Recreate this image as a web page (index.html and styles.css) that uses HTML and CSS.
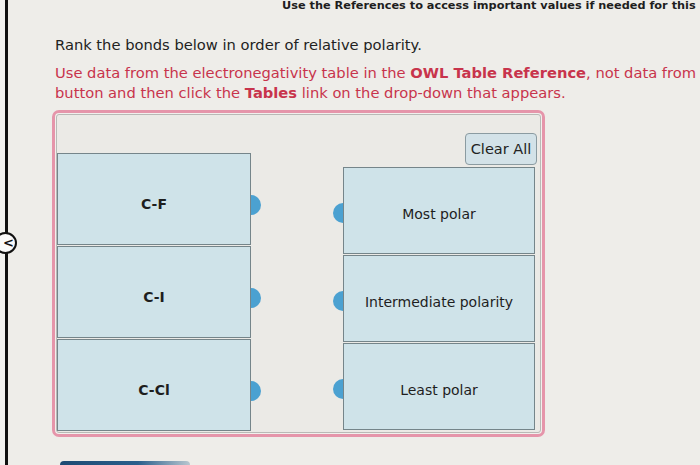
FILE: index.html
```html
<!DOCTYPE html>
<html>
<head>
<meta charset="utf-8">
<link rel="stylesheet" href="styles.css">
</head>
<body>
<div class="page">
  <div class="edge"></div>
  <div class="rule"></div>
  <div class="toggle">&lt;</div>
  <main class="main">
    <div class="refs">Use the References to access important values if needed for this</div>
    <p class="prompt">Rank the bonds below in order of relative polarity.</p>
    <p class="note">Use data from the electronegativity table in the <b>OWL Table Reference</b>, not data from your text. The References<br>button and then click the <b>Tables</b> link on the drop-down that appears.</p>
    <div class="panel">
      <div class="panel-inner">
        <div class="col col-left">
          <div class="card card-src"><b>C-F</b></div>
          <div class="card card-src"><b>C-I</b></div>
          <div class="card card-src"><b>C-Cl</b></div>
        </div>
        <div class="col col-right">
          <div class="actions"><button class="clear">Clear All</button></div>
          <div class="card card-dst">Most polar</div>
          <div class="card card-dst">Intermediate polarity</div>
          <div class="card card-dst">Least polar</div>
        </div>
      </div>
    </div>
    <div class="submit"></div>
  </main>
</div>
</body>
</html>
```

FILE: styles.css
```css
html, body {
  margin: 0;
  padding: 0;
  width: 700px;
  height: 465px;
  overflow: hidden;
  background: #eeede9;
  font-family: "DejaVu Sans", Verdana, sans-serif;
  color: #222;
}
.page {
  position: relative;
  display: flex;
  height: 465px;
}
.edge {
  width: 5px;
  background: #f2f2f0;
}
.rule {
  width: 3px;
  background: #111;
}
.toggle {
  position: absolute;
  left: -6px;
  top: 232px;
  width: 18px;
  height: 18px;
  border: 2px solid #111;
  border-radius: 50%;
  background: #fafafa;
  color: #111;
  font-weight: bold;
  font-size: 13px;
  line-height: 18px;
  text-align: right;
  padding-right: 1px;
  box-sizing: content-box;
}
.main {
  flex: 1;
  padding-left: 47px;
  min-width: 0;
}
.refs {
  margin-left: 227px;
  height: 16px;
  line-height: 16px;
  margin-top: -2px;
  font-size: 11.3px;
  font-weight: bold;
  white-space: nowrap;
  color: #1e1e1e;
}
.prompt {
  margin: 22px 0 0;
  font-size: 14.7px;
  line-height: 18px;
  white-space: nowrap;
}
.note {
  margin: 9px 0 0;
  font-size: 14.7px;
  line-height: 20px;
  color: #c8344c;
  white-space: nowrap;
}
.panel {
  margin: 7px 0 0 -3px;
  width: 493px;
  height: 327px;
  box-sizing: border-box;
  border: 3px solid #e595aa;
  border-radius: 7px;
  padding: 1px;
  background: #f1f0ed;
}
.panel-inner {
  box-sizing: border-box;
  height: 100%;
  border: 1px solid #b9b9b6;
  border-radius: 3px;
  background: #ebeae6;
  display: grid;
  grid-template-columns: 194px 192px;
  column-gap: 92px;
  padding-right: 5px;
}
.col {
  display: flex;
  flex-direction: column;
  gap: 1px;
}
.col-left {
  margin-top: 38px;
}
.col-right {
  margin-top: 18px;
}
.actions {
  display: flex;
  justify-content: flex-end;
  margin-bottom: 1px;
}
.clear {
  width: 72px;
  height: 32px;
  margin-right: -2px;
  background: #d3e2e8;
  border: 1px solid #8b9ba1;
  border-radius: 4px;
  font-family: "DejaVu Sans", Verdana, sans-serif;
  font-size: 14.5px;
  color: #222;
  padding: 0;
}
.card {
  position: relative;
  box-sizing: border-box;
  background: #cfe3e9;
  border: 1px solid #75858a;
  display: flex;
  align-items: center;
  justify-content: center;
  font-size: 14px;
  color: #1e1e1e;
}
.card-src {
  height: 92px;
  padding-top: 10px;
}
.card-dst {
  height: 87px;
  padding-top: 6px;
}
.card-src::after {
  content: "";
  position: absolute;
  right: -11px;
  top: 50%;
  margin-top: -4px;
  width: 10px;
  height: 20px;
  background: #4ba1d1;
  border-radius: 0 10px 10px 0;
}
.card-dst::before {
  content: "";
  position: absolute;
  left: -11px;
  top: 50%;
  margin-top: -8px;
  width: 10px;
  height: 20px;
  background: #4ba1d1;
  border-radius: 10px 0 0 10px;
}
.submit {
  margin: 24px 0 0 5px;
  width: 130px;
  height: 10px;
  border-radius: 4px 4px 0 0;
  background: linear-gradient(90deg, #1d4a73 0%, #2a5f8c 60%, rgba(60,110,150,0.3) 100%);
}
```
